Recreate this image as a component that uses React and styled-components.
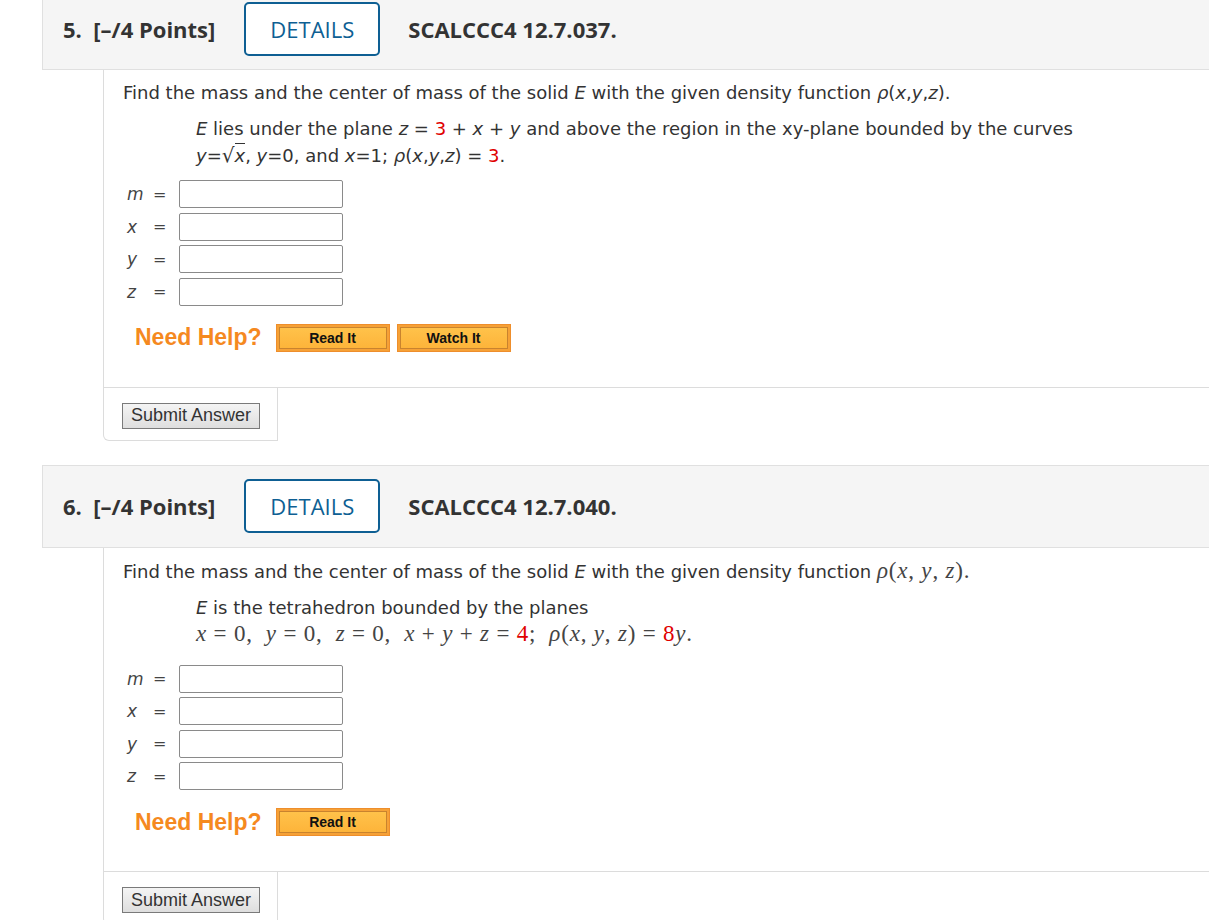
import React from "react";
import styled, { createGlobalStyle } from "styled-components";

const GlobalStyle = createGlobalStyle`
  html, body {
    margin: 0;
    padding: 0;
    background: #fff;
    overflow: hidden;
  }
  body {
    font-family: "DejaVu Sans", Verdana, sans-serif;
    color: #333;
  }
`;

const V = ({ children }) => <S.Var>{children}</S.Var>;
const M = ({ children }) => <S.MathVar>{children}</S.MathVar>;

const Question5 = () => (
  <>
    <S.Prompt>
      Find the mass and the center of mass of the solid <V>E</V> with the given density function{" "}
      <V>ρ</V>(<V>x</V>,<V>y</V>,<V>z</V>).
    </S.Prompt>
    <S.Indented>
      <V>E</V> lies under the plane <V>z</V> = <S.Red>3</S.Red> + <V>x</V> + <V>y</V> and above the region in the
      xy-plane bounded by the curves
      <br />
      <V>y</V>=<S.Radical>√</S.Radical><S.Over><V>x</V></S.Over>, <V>y</V>=0, and <V>x</V>=1;{" "}
      <V>ρ</V>(<V>x</V>,<V>y</V>,<V>z</V>) = <S.Red>3</S.Red>.
    </S.Indented>
  </>
);

const Question6 = () => (
  <>
    <S.Prompt>
      Find the mass and the center of mass of the solid <V>E</V> with the given density function{" "}
      <S.Math>
        <M>ρ</M>(<M>x</M>, <M>y</M>, <M>z</M>).
      </S.Math>
    </S.Prompt>
    <S.Indented>
      <V>E</V> is the tetrahedron bounded by the planes
      <br />
      <S.Math>
        <M>x</M> = 0, &nbsp;<M>y</M> = 0, &nbsp;<M>z</M> = 0, &nbsp;<M>x</M> + <M>y</M> + <M>z</M> ={" "}
        <S.Red>4</S.Red>; &nbsp;<M>ρ</M>(<M>x</M>, <M>y</M>, <M>z</M>) = <S.Red>8</S.Red>
        <M>y</M>.
      </S.Math>
    </S.Indented>
  </>
);

const questions = [
  { num: 5, code: "SCALCCC4 12.7.037.", Content: Question5, gridTop: 11, video: true },
  { num: 6, code: "SCALCCC4 12.7.040.", Content: Question6, gridTop: 17, video: false },
];

const answers = ["m", "x", "y", "z"];

export default function App() {
  return (
    <S.Page>
      <GlobalStyle />
      {questions.map(({ num, code, Content, gridTop, video }) => (
        <S.Question key={num}>
          <S.Header>
            <S.Points>
              {num}.&nbsp; [–/4 Points]
            </S.Points>
            <S.Details type="button">DETAILS</S.Details>
            <S.Code>{code}</S.Code>
          </S.Header>
          <S.Body>
            <Content />
            <S.Answers $top={gridTop}>
              {answers.map((a) => (
                <S.AnswerRow key={a}>
                  <S.Label>{a}</S.Label>
                  <S.Eq>=</S.Eq>
                  <S.Input type="text" />
                </S.AnswerRow>
              ))}
            </S.Answers>
            <S.HelpRow>
              <S.NeedHelp>Need Help?</S.NeedHelp>
              <S.HelpButton type="button">
                <span>Read It</span>
              </S.HelpButton>
              {video && (
                <S.HelpButton type="button">
                  <span>Watch It</span>
                </S.HelpButton>
              )}
            </S.HelpRow>
          </S.Body>
          <S.Footer>
            <S.Submit type="button">Submit Answer</S.Submit>
          </S.Footer>
        </S.Question>
      ))}
    </S.Page>
  );
}

const S = {
  Page: styled.div`
    margin-top: -13px;
    padding-left: 42px;
    width: 1180px;
    display: flex;
    flex-direction: column;
    gap: 24px;
  `,
  Question: styled.section`
    display: flex;
    flex-direction: column;
  `,
  Header: styled.div`
    height: 81px;
    display: flex;
    align-items: center;
    padding-left: 20px;
    background: #f5f5f5;
    border: 1px solid #e0e0e0;
    font-family: "Open Sans", sans-serif;
    color: #333;
  `,
  Points: styled.span`
    font-size: 22px;
    font-weight: 700;
    margin-right: 29px;
  `,
  Details: styled.button`
    height: 54px;
    padding: 0 24px;
    background: #fff;
    border: 2px solid #0e5f93;
    border-radius: 5px;
    color: #0e5f93;
    font-family: "Open Sans", sans-serif;
    font-size: 22px;
    margin-right: 28px;
  `,
  Code: styled.span`
    font-size: 22px;
    font-weight: 700;
  `,
  Body: styled.div`
    margin-left: 61px;
    padding: 13px 0 35px 19px;
    border-left: 1px solid #dcdcdc;
    border-bottom: 1px solid #dcdcdc;
    font-size: 18px;
  `,
  Prompt: styled.div`
    line-height: 20px;
  `,
  Indented: styled.div`
    margin: 12px 0 0 73px;
    line-height: 27px;
  `,
  Var: styled.i`
    font-style: italic;
  `,
  MathVar: styled.i`
    font-style: italic;
  `,
  Math: styled.span`
    font-family: "Liberation Serif", "DejaVu Serif", serif;
    font-size: 23px;
    letter-spacing: 0.8px;
    color: #444;
    line-height: 20px;
  `,
  Red: styled.span`
    color: #e00000;
  `,
  Radical: styled.span`
    font-size: 20px;
  `,
  Over: styled.span`
    border-top: 1px solid #333;
    padding-top: 1px;
  `,
  Answers: styled.div`
    margin-top: ${(p) => p.$top}px;
    margin-left: 4px;
    display: flex;
    flex-direction: column;
    gap: 4.5px;
  `,
  AnswerRow: styled.div`
    display: grid;
    grid-template-columns: 26px 26px 164px;
    align-items: center;
    color: #444;
  `,
  Label: styled.span`
    font-style: italic;
    font-size: 17px;
  `,
  Eq: styled.span`
    font-size: 16px;
  `,
  Input: styled.input`
    box-sizing: border-box;
    width: 164px;
    height: 28px;
    margin: 0;
    border: 1px solid #8a8a8a;
    border-radius: 2px;
    background: #fff;
  `,
  HelpRow: styled.div`
    margin: 18px 0 0 12px;
    display: flex;
    align-items: center;
    height: 28px;
  `,
  NeedHelp: styled.span`
    font-family: "Liberation Sans", Arial, sans-serif;
    font-weight: 700;
    font-size: 23px;
    color: #f5891f;
    margin-right: 14px;
  `,
  HelpButton: styled.button`
    box-sizing: border-box;
    width: 114px;
    height: 28px;
    margin: 0 7px 0 0;
    padding: 2px;
    display: flex;
    background: #f6a136;
    border: 1px solid #ee8e2c;
    cursor: pointer;

    span {
      flex: 1;
      display: flex;
      align-items: center;
      justify-content: center;
      background: linear-gradient(#ffc24a, #fdb43a);
      border: 1px solid #c9832e;
      font-family: "Liberation Sans", Arial, sans-serif;
      font-weight: 700;
      font-size: 14px;
      color: #111;
    }
  `,
  Footer: styled.div`
    box-sizing: border-box;
    width: 175px;
    margin-left: 61px;
    padding: 15px 0 11px 18px;
    border: 1px solid #dcdcdc;
    border-top: none;
    border-bottom-left-radius: 6px;
  `,
  Submit: styled.button`
    height: 26px;
    padding: 0 8px;
    background: linear-gradient(#f4f4f4, #dedede);
    border: 1px solid #7a7a7a;
    border-radius: 0;
    font-family: "Liberation Sans", Arial, sans-serif;
    font-size: 18px;
    color: #333;
  `,
};
